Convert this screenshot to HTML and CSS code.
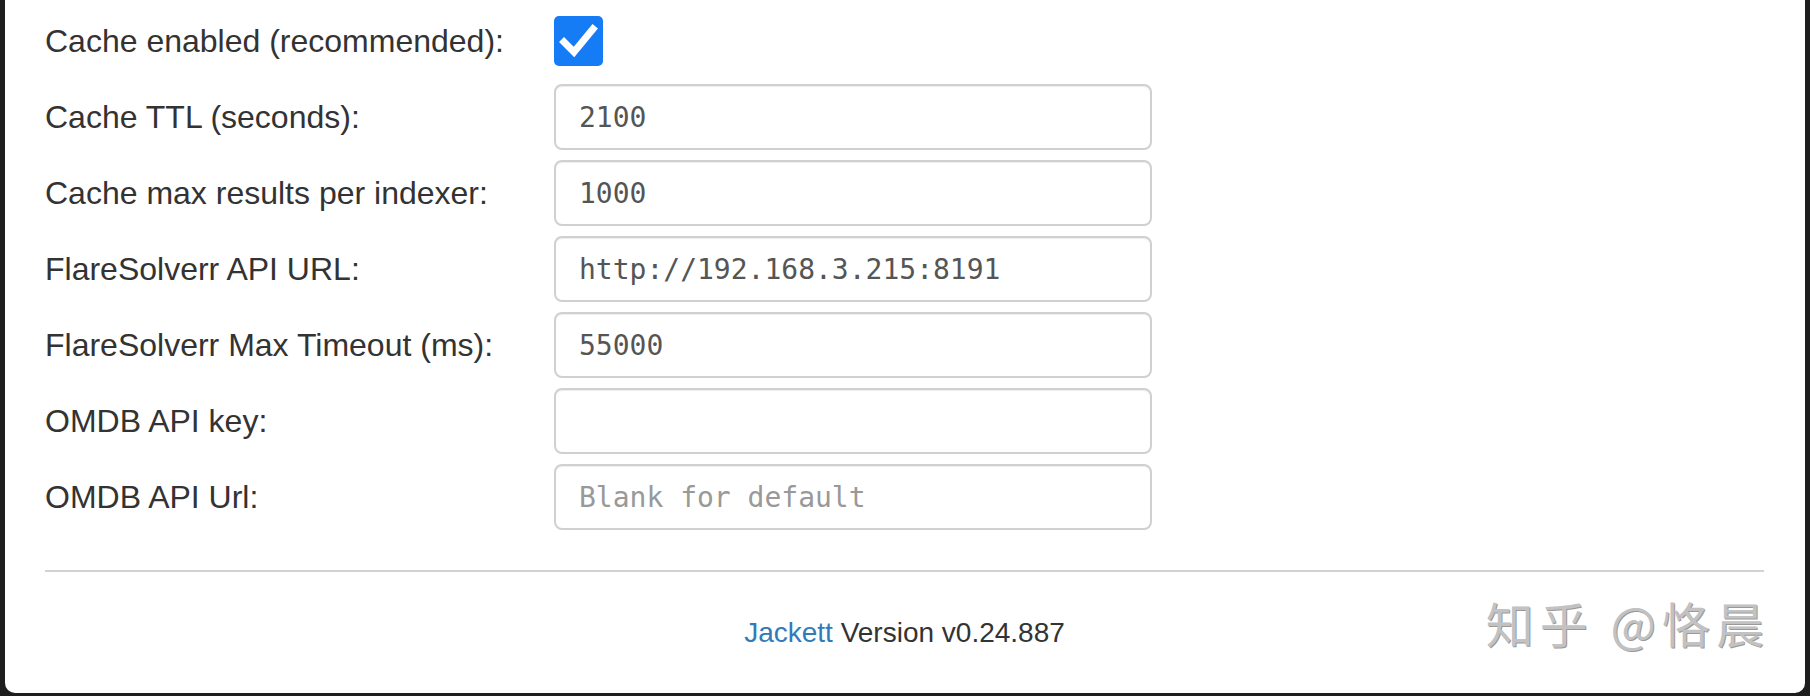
FILE: index.html
```html
<!DOCTYPE html>
<html>
<head>
<meta charset="utf-8">
<link rel="stylesheet" href="styles.css">
</head>
<body>
<div class="card">
  <div class="form">
    <div class="row">
      <label class="lbl">Cache enabled (recommended):</label>
      <div class="field">
        <span class="check">
          <svg width="49" height="50" viewBox="0 0 49 50"><rect x="0" y="0" width="49" height="50" rx="5" fill="#157cf6"/><path d="M10 26 L20 36 L39 13" fill="none" stroke="#fff" stroke-width="7" stroke-linecap="square"/></svg>
        </span>
      </div>
    </div>
    <div class="row">
      <label class="lbl">Cache TTL (seconds):</label>
      <div class="field"><input class="inp" type="text" value="2100"></div>
    </div>
    <div class="row">
      <label class="lbl">Cache max results per indexer:</label>
      <div class="field"><input class="inp" type="text" value="1000"></div>
    </div>
    <div class="row">
      <label class="lbl">FlareSolverr API URL:</label>
      <div class="field"><input class="inp" type="text" value="http://192.168.3.215:8191"></div>
    </div>
    <div class="row">
      <label class="lbl">FlareSolverr Max Timeout (ms):</label>
      <div class="field"><input class="inp" type="text" value="55000"></div>
    </div>
    <div class="row">
      <label class="lbl">OMDB API key:</label>
      <div class="field"><input class="inp" type="text" value=""></div>
    </div>
    <div class="row">
      <label class="lbl">OMDB API Url:</label>
      <div class="field"><input class="inp" type="text" placeholder="Blank for default"></div>
    </div>
  </div>
  <hr class="rule">
  <div class="footer"><a class="link" href="#">Jackett</a> Version v0.24.887</div>
  <div class="watermark">知乎 @恪晨</div>
</div>
</body>
</html>
```
FILE: styles.css
```css
html, body {
  margin: 0;
  padding: 0;
  background: #1e1e1e;
}
body {
  width: 1810px;
  height: 696px;
  overflow: hidden;
}
.card {
  position: relative;
  margin: 0 5px 0 5px;
  height: 693px;
  background: #fff;
  border-radius: 0 0 10px 10px;
  padding: 8px 41px 0 40px;
  box-sizing: border-box;
  font-family: "Liberation Sans", Arial, sans-serif;
  color: #333;
}
.form {
  display: flex;
  flex-direction: column;
  gap: 10px;
}
.row {
  display: grid;
  grid-template-columns: 509px 598px;
  height: 66px;
  align-items: center;
}
.lbl {
  font-size: 32px;
  line-height: 40px;
  color: #333;
}
.field {
  display: flex;
  align-items: center;
  height: 66px;
}
.check {
  display: block;
  width: 49px;
  height: 50px;
  position: relative;
  top: 0;
}
.check svg {
  display: block;
}
.inp {
  width: 598px;
  height: 66px;
  box-sizing: border-box;
  border: 2px solid #d0d0d0;
  border-radius: 8px;
  padding: 0 23px;
  font-family: "DejaVu Sans Mono", "Liberation Mono", monospace;
  font-size: 28px;
  color: #555;
  background: #fff;
  box-shadow: inset 0 1px 1px rgba(0,0,0,.075);
  outline: none;
}
.inp::placeholder {
  color: #999;
}
.rule {
  margin: 40px 0 0 0;
  border: 0;
  border-top: 2px solid #d2d2d2;
  height: 0;
}
.footer {
  margin-top: 41px;
  text-align: center;
  font-size: 28px;
  line-height: 40px;
  color: #333;
}
.link {
  color: #337ab7;
  text-decoration: none;
}
.watermark {
  position: absolute;
  right: 41px;
  top: 594px;
  font-family: "Noto Sans CJK SC", sans-serif;
  font-size: 48px;
  line-height: 56px;
  letter-spacing: 6px;
  color: #c2c2c2;
  text-shadow: 1px 1px 0 #9a9a9a;
  margin-right: -6px;
}
```
